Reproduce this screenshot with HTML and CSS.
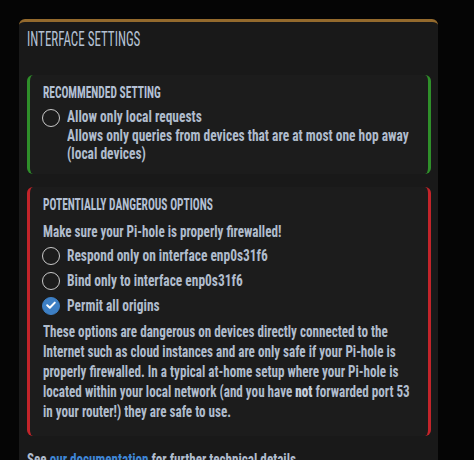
FILE: index.html
```html
<!DOCTYPE html>
<html lang="en">
<head>
<meta charset="utf-8">
<title>Interface settings</title>
<link rel="stylesheet" href="styles.css">
</head>
<body>
<div class="page">
  <section class="card">
    <h2 class="card-title"><span class="cond-title">INTERFACE SETTINGS</span></h2>

    <div class="box box-ok">
      <h3 class="box-title"><span class="cond-head">RECOMMENDED SETTING</span></h3>
      <label class="opt opt-tall">
        <span class="radio"></span>
        <span class="opt-text"><span class="sq">Allow only local requests<br>Allows only queries from devices that are at most one hop away (local devices)</span></span>
      </label>
    </div>

    <div class="box box-danger">
      <h3 class="box-title"><span class="cond-head">POTENTIALLY DANGEROUS OPTIONS</span></h3>
      <p class="note"><span class="sq sq-text">Make sure your Pi-hole is properly firewalled!</span></p>
      <label class="opt">
        <span class="radio"></span>
        <span class="opt-text"><span class="sq">Respond only on interface enp0s31f6</span></span>
      </label>
      <label class="opt">
        <span class="radio"></span>
        <span class="opt-text"><span class="sq">Bind only to interface enp0s31f6</span></span>
      </label>
      <label class="opt">
        <span class="radio radio-on">
          <svg viewBox="0 0 18 18" width="18" height="18" aria-hidden="true"><path d="M5.2 9.3l2.6 2.5 5-5.2" fill="none" stroke="#fff" stroke-width="2" stroke-linecap="round" stroke-linejoin="round"/></svg>
        </span>
        <span class="opt-text"><span class="sq">Permit all origins</span></span>
      </label>
      <p class="desc"><span class="sq sq-text">These options are dangerous on devices directly connected to the Internet such as cloud instances and are only safe if your Pi-hole is properly firewalled. In a typical at-home setup where your Pi-hole is located within your local network (and you have <b>not</b> forwarded port 53 in your router!) they are safe to use.</span></p>
    </div>

    <p class="foot"><span class="sq sq-text">See <a href="#">our documentation</a> for further technical details.</span></p>
  </section>
</div>
</body>
</html>
```
FILE: styles.css
```css
html, body {
  margin: 0;
  padding: 0;
  background: #050505;
}

body {
  font-family: Roboto, "Liberation Sans", sans-serif;
  font-stretch: condensed;
  font-weight: 700;
  font-size: 16px;
  color: #b0bccd;
}

.page {
  padding: 19px 36px 0 19px;
}

.card {
  width: 419px;
  box-sizing: border-box;
  background: #191919;
  border-top: 3px solid #946a2d;
  border-radius: 6px 6px 0 0;
  padding: 5px 7px 0 8px;
  height: 460px;
}

.card-title {
  margin: 0;
  font-size: 20px;
  font-weight: 400;
  line-height: 24px;
  color: #b4c0d2;
  white-space: nowrap;
}

.cond-title {
  display: inline-block;
  transform: scaleX(0.65);
  transform-origin: 0 0;
}

.box {
  background: #1c1c1c;
  border-left: 3px solid;
  border-right: 3px solid;
  border-radius: 6px;
  padding: 8px 8px 10px 13px;
}

.box-ok {
  margin-top: 24px;
  border-color: #2f8f2a;
}

.box-danger {
  margin-top: 13px;
  border-color: #c3242a;
  padding-bottom: 14px;
}

.box-title {
  margin: 0;
  font-size: 16px;
  font-weight: 700;
  line-height: 20px;
  color: #b3c0d4;
  white-space: nowrap;
}

.cond-head {
  display: inline-block;
  transform: scaleX(0.715);
  transform-origin: 0 0;
}

.sq {
  display: block;
  width: calc(100% / 0.84);
  transform: scaleX(0.84);
  transform-origin: 0 0;
}

.sq-text {
  width: calc(100% / 0.82);
  transform: scaleX(0.82);
}

.opt {
  display: flex;
  align-items: center;
  gap: 7px;
  height: 25px;
  line-height: 25px;
}

.opt-tall {
  align-items: flex-start;
  height: auto;
  line-height: 18.5px;
  margin-top: 5px;
}

.opt-tall .radio {
  margin-top: 0.5px;
}

.opt-text {
  flex: 1;
  min-width: 0;
}

.radio {
  flex: none;
  width: 18px;
  height: 18px;
  box-sizing: border-box;
  border: 1.5px solid #c9c9c9;
  border-radius: 50%;
  margin-left: -1px;
  position: relative;
}

.radio-on {
  background: #3d7fc4;
  border-color: #3d7fc4;
}

.radio-on svg {
  position: absolute;
  left: -1.5px;
  top: -1.5px;
}

.note {
  margin: 7px 0 1.5px;
  line-height: 20px;
}

.desc {
  margin: 3.5px 0 0;
  line-height: 20px;
}

.desc b {
  font-weight: 900;
  color: #c4cedb;
}

.foot {
  margin: 14px 0 0;
  line-height: 20px;
}

.foot a {
  color: #3f86d6;
  text-decoration: none;
}
```
